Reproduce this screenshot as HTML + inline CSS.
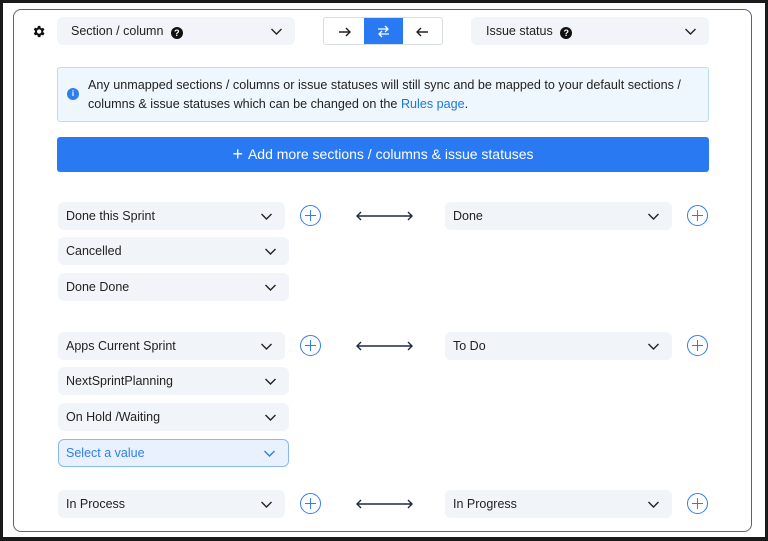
<!DOCTYPE html>
<html><head><style>
*{box-sizing:border-box;margin:0;padding:0}
body{width:768px;height:541px;background:#1a1a1a;font-family:"Liberation Sans",sans-serif;font-size:12.5px;color:#222;position:relative;overflow:hidden}
.page{position:absolute;left:3px;top:3px;width:762px;height:534px;background:#fff}
.panel{position:absolute;left:13px;top:9px;width:739px;height:523px;border:1px solid #5a6478;border-radius:8px;background:#fff}
.dd{position:absolute;height:28px;background:#f1f4f8;border-radius:6px;padding-left:8px;line-height:28px;color:#222}
.dd .chev{position:absolute;right:12px;top:9px;width:9px;height:9px}
.plus{position:absolute;width:21px;height:21px;border:1.5px solid #2f7ef0;border-radius:50%}
.plus:before{content:"";position:absolute;left:4px;right:4px;top:8.5px;height:1.5px;background:#2f7ef0}
.plus:after{content:"";position:absolute;top:4px;bottom:4px;left:8.5px;width:1.5px;background:#2f7ef0}
.arr{position:absolute;width:57px;height:10px}
.abs{position:absolute}
</style></head><body>
<div class="page"></div>
<div class="panel"></div>
<svg class="abs" style="left:31px;top:24px" width="15" height="15" viewBox="0 0 24 24"><path fill="#111" d="M19.4 13a7.5 7.5 0 0 0 0-2l2.1-1.6-2-3.5-2.5 1a7 7 0 0 0-1.7-1L15 3h-4l-.4 2.7a7 7 0 0 0-1.7 1l-2.5-1-2 3.5L6.5 11a7.5 7.5 0 0 0 0 2l-2.1 1.6 2 3.5 2.5-1a7 7 0 0 0 1.7 1L11 21h4l.4-2.7a7 7 0 0 0 1.7-1l2.5 1 2-3.5zM13 15.5a3.5 3.5 0 1 1 0-7 3.5 3.5 0 0 1 0 7z"/></svg>

<div class="dd" style="left:57px;top:17px;width:238px;padding-left:14px">Section / column <span style="display:inline-block;width:12px;height:12px;border-radius:50%;background:#111;color:#fff;font-size:9px;line-height:12px;text-align:center;font-weight:bold;vertical-align:-1px;margin-left:4px">?</span>
<svg class="chev" style="right:12px;width:13px;top:8px;height:12px" viewBox="0 0 12 12"><path d="M1 4l5 5 5-5" stroke="#222" stroke-width="1.4" fill="none"/></svg></div>

<div class="abs" style="left:323px;top:17px;width:120px;height:28px;border:1px solid #d8dde3;border-radius:3px;overflow:hidden">
<div class="abs" style="left:40px;top:0;width:39px;height:28px;background:#2979f2"></div>
<svg class="abs" style="left:14px;top:8px" width="14" height="12" viewBox="0 0 14 12"><path d="M1 6h11M8 2l4 4-4 4" stroke="#222" stroke-width="1.4" fill="none"/></svg>
<svg class="abs" style="left:53px;top:7px" width="13" height="13" viewBox="0 0 13 13"><path d="M1 4h10M8 1l3 3-3 3M12 9H2M5 6l-3 3 3 3" stroke="#fff" stroke-width="1.3" fill="none"/></svg>
<svg class="abs" style="left:91px;top:8px" width="14" height="12" viewBox="0 0 14 12"><path d="M13 6H2M6 2L2 6l4 4" stroke="#222" stroke-width="1.4" fill="none"/></svg>
</div>

<div class="dd" style="left:471px;top:17px;width:238px;padding-left:15px">Issue status <span style="display:inline-block;width:12px;height:12px;border-radius:50%;background:#111;color:#fff;font-size:9px;line-height:12px;text-align:center;font-weight:bold;vertical-align:-1px;margin-left:4px">?</span>
<svg class="chev" style="right:12px;width:13px;top:8px;height:12px" viewBox="0 0 12 12"><path d="M1 4l5 5 5-5" stroke="#222" stroke-width="1.4" fill="none"/></svg></div>

<div class="abs" style="left:57px;top:67px;width:652px;height:55px;background:#eef6fe;border:1px solid #bcdcf6;border-radius:3px;padding:8px 10px 0 30px;line-height:19px;font-size:12.6px;color:#222">
<span class="abs" style="left:9px;top:20px;width:12px;height:12px;border-radius:50%;background:#2f7ef0;color:#fff;font-size:8px;line-height:12px;text-align:center;font-weight:bold">i</span>
Any unmapped sections / columns or issue statuses will still sync and be mapped to your default sections / columns &amp; issue statuses which can be changed on the <span style="color:#1a79d8">Rules page</span>.</div>

<div class="abs" style="left:57px;top:137px;width:652px;height:35px;background:#2979f2;border-radius:3px;color:#fff;font-size:14px;line-height:35px;text-align:center"><span style="font-size:18px;vertical-align:-1px;margin-right:5px">+</span>Add more sections / columns &amp; issue statuses</div>

<!-- group 1 -->
<div class="dd" style="left:58px;top:202px;width:227px">Done this Sprint<svg class="chev" viewBox="0 0 12 12" style="width:13px;height:12px;top:8px"><path d="M1 4l5 5 5-5" stroke="#222" stroke-width="1.4" fill="none"/></svg></div>
<div class="plus" style="left:300px;top:205px"></div>
<svg class="arr" style="left:356px;top:211px" viewBox="0 0 57 10"><path d="M1 5h55M5 1L1 5l4 4M52 1l4 4-4 4" stroke="#1f2a44" stroke-width="1.4" fill="none"/></svg>
<div class="dd" style="left:445px;top:202px;width:227px">Done<svg class="chev" viewBox="0 0 12 12" style="width:13px;height:12px;top:8px"><path d="M1 4l5 5 5-5" stroke="#222" stroke-width="1.4" fill="none"/></svg></div>
<div class="plus" style="left:687px;top:205px"></div>
<div class="dd" style="left:58px;top:237px;width:231px">Cancelled<svg class="chev" viewBox="0 0 12 12" style="width:13px;height:12px;top:8px"><path d="M1 4l5 5 5-5" stroke="#222" stroke-width="1.4" fill="none"/></svg></div>
<div class="dd" style="left:58px;top:273px;width:231px">Done Done<svg class="chev" viewBox="0 0 12 12" style="width:13px;height:12px;top:8px"><path d="M1 4l5 5 5-5" stroke="#222" stroke-width="1.4" fill="none"/></svg></div>

<!-- group 2 -->
<div class="dd" style="left:58px;top:332px;width:227px">Apps Current Sprint<svg class="chev" viewBox="0 0 12 12" style="width:13px;height:12px;top:8px"><path d="M1 4l5 5 5-5" stroke="#222" stroke-width="1.4" fill="none"/></svg></div>
<div class="plus" style="left:300px;top:335px"></div>
<svg class="arr" style="left:356px;top:341px" viewBox="0 0 57 10"><path d="M1 5h55M5 1L1 5l4 4M52 1l4 4-4 4" stroke="#1f2a44" stroke-width="1.4" fill="none"/></svg>
<div class="dd" style="left:445px;top:332px;width:227px">To Do<svg class="chev" viewBox="0 0 12 12" style="width:13px;height:12px;top:8px"><path d="M1 4l5 5 5-5" stroke="#222" stroke-width="1.4" fill="none"/></svg></div>
<div class="plus" style="left:687px;top:335px"></div>
<div class="dd" style="left:58px;top:367px;width:231px">NextSprintPlanning<svg class="chev" viewBox="0 0 12 12" style="width:13px;height:12px;top:8px"><path d="M1 4l5 5 5-5" stroke="#222" stroke-width="1.4" fill="none"/></svg></div>
<div class="dd" style="left:58px;top:403px;width:231px">On Hold /Waiting<svg class="chev" viewBox="0 0 12 12" style="width:13px;height:12px;top:8px"><path d="M1 4l5 5 5-5" stroke="#222" stroke-width="1.4" fill="none"/></svg></div>
<div class="dd" style="left:58px;top:439px;width:231px;background:#e8f1fd;border:1px solid #8ab8f7;line-height:26px;padding-left:7px;color:#2f7ef0">Select a value<svg class="chev" viewBox="0 0 12 12" style="width:13px;height:12px;top:7px"><path d="M1 4l5 5 5-5" stroke="#2f7ef0" stroke-width="1.4" fill="none"/></svg></div>

<!-- group 3 -->
<div class="dd" style="left:58px;top:490px;width:227px">In Process<svg class="chev" viewBox="0 0 12 12" style="width:13px;height:12px;top:8px"><path d="M1 4l5 5 5-5" stroke="#222" stroke-width="1.4" fill="none"/></svg></div>
<div class="plus" style="left:300px;top:493px"></div>
<svg class="arr" style="left:356px;top:499px" viewBox="0 0 57 10"><path d="M1 5h55M5 1L1 5l4 4M52 1l4 4-4 4" stroke="#1f2a44" stroke-width="1.4" fill="none"/></svg>
<div class="dd" style="left:445px;top:490px;width:227px">In Progress<svg class="chev" viewBox="0 0 12 12" style="width:13px;height:12px;top:8px"><path d="M1 4l5 5 5-5" stroke="#222" stroke-width="1.4" fill="none"/></svg></div>
<div class="plus" style="left:687px;top:493px"></div>
</body></html>
